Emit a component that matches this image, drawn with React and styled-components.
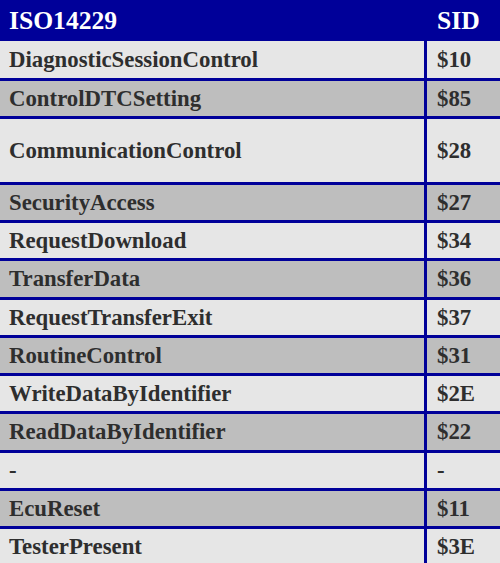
import React from 'react';
import styled, { createGlobalStyle } from 'styled-components';

const rows = [
    ['DiagnosticSessionControl', '$10', 37],
    ['ControlDTCSetting', '$85', 35],
    ['CommunicationControl', '$28', 63],
    ['SecurityAccess', '$27', 35],
    ['RequestDownload', '$34', 35],
    ['TransferData', '$36', 36],
    ['RequestTransferExit', '$37', 35],
    ['RoutineControl', '$31', 35],
    ['WriteDataByIdentifier', '$2E', 35],
    ['ReadDataByIdentifier', '$22', 36],
    ['-', '-', 35],
    ['EcuReset', '$11', 35],
    ['TesterPresent', '$3E', 35],
];

const App = () => {
    return (
        <>
            <Global />
            <Table>
                <Head>
                    <span>ISO14229</span>
                    <span>SID</span>
                </Head>
                {rows.map(([name, sid, h], i) => (
                    <Row key={i} $dark={i % 2 === 1} $h={h}>
                        <Name>{name}</Name>
                        <Sid>{sid}</Sid>
                    </Row>
                ))}
            </Table>
        </>
    );
}

export default App;

const Global = createGlobalStyle`
body{
    margin: 0;
    background: #e6e6e6;
    overflow: hidden;
}
`

const Table = styled.div`
width: 500px;
height: 563px;
overflow: hidden;
font-family: 'Liberation Serif', 'Times New Roman', serif;
font-weight: bold;
font-size: 22.8px;
color: #2e2e2e;
`

const Head = styled.div`
display: grid;
grid-template-columns: 427px 1fr;
height: 41px;
align-items: center;
background: #000099;
color: #ffffff;
font-size: 25.6px;
span{
    padding-left: 9px;
}
span:last-child{
    padding-left: 10px;
}
`

const Row = styled.div`
display: grid;
grid-template-columns: 424px 3px 1fr;
height: ${p => p.$h}px;
border-bottom: 3px solid #000099;
background: ${p => (p.$dark ? '#bebebe' : '#e6e6e6')};
&::before{
    content: '';
    grid-column: 2;
    grid-row: 1;
    background: #000099;
}
`

const Name = styled.div`
grid-column: 1;
grid-row: 1;
display: flex;
align-items: center;
padding-left: 9px;
`

const Sid = styled.div`
grid-column: 3;
grid-row: 1;
display: flex;
align-items: center;
padding-left: 10px;
`
